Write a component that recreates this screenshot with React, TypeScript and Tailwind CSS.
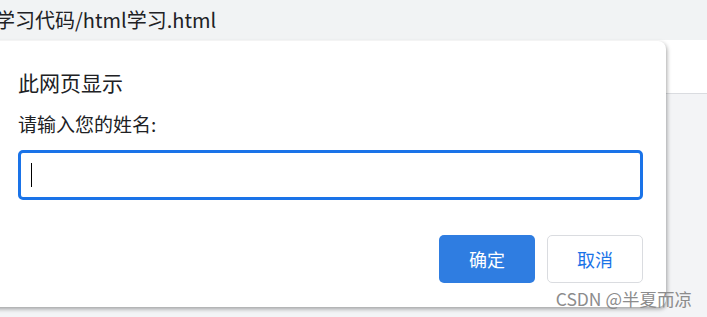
const cjk = '"Noto Sans CJK SC", "Liberation Sans", sans-serif';

export default function App() {
  return (
    <div
      className="relative w-[707px] h-[317px] overflow-hidden bg-[#f3f4f6]"
      style={{ fontFamily: cjk }}
    >
      {/* address bar */}
      <div className="h-[40px] bg-[#f1f3f4] flex items-center">
        <span className="ml-[-5px] text-[20px] leading-none text-[#202124] whitespace-nowrap">学习代码/html学习.html</span>
      </div>
      <div className="h-[54px] bg-white border-b border-[#dadce0]" />

      {/* prompt dialog */}
      <div className="absolute left-[-20px] top-[41px] w-[686px] h-[266px] bg-white rounded-[8px] shadow-[1px_2px_4px_rgba(0,0,0,0.35)] pl-[38px] pr-[23px] pt-[26px]">
        <div className="text-[21px] leading-[30px] text-[#202124]">此网页显示</div>
        <div className="mt-[14px] text-[19px] leading-[26px] text-[#202124]">请输入您的姓名:</div>
        <div className="mt-[13px] h-[50px] w-[625px] border-[3px] border-[#1a73e8] rounded-[5px] flex items-center pl-[10px]">
          <div className="w-[1px] h-[24px] bg-black" />
        </div>
        <div className="mt-[35px] flex justify-end gap-[12px] w-[625px]">
          <button className="w-[96px] h-[48px] rounded-[5px] bg-[#2f7de1] text-white text-[18px]">确定</button>
          <button className="w-[96px] h-[48px] rounded-[5px] bg-white border border-[#dadce0] text-[#1a73e8] text-[18px]">取消</button>
        </div>
      </div>

      {/* watermark */}
      <div className="absolute right-[15px] top-[288px] text-[17.5px] leading-[22px] text-[#8c8c8c] whitespace-nowrap">
        CSDN @半夏而凉
      </div>
    </div>
  );
}
